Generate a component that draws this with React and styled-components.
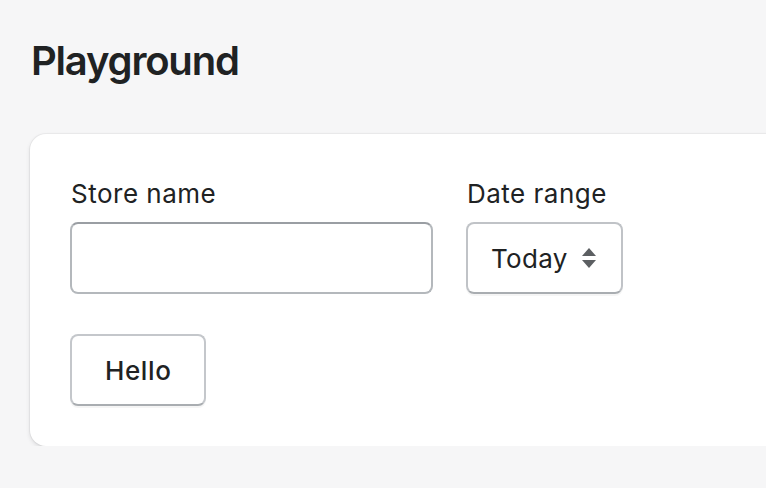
import React, { useState } from 'react';
import styled, { createGlobalStyle } from 'styled-components';

const GlobalStyle = createGlobalStyle`
  html, body {
    margin: 0;
    padding: 0;
    overflow: hidden;
    background: #f6f6f7;
  }
  body {
    font-family: Inter, 'Noto Sans', sans-serif;
    color: #202223;
  }
`;

const Page = styled.div`
  padding: 33px 0 0 30px;
`;

const Title = styled.h1`
  margin: 0 0 46px 1px;
  font-size: 40px;
  line-height: 55px;
  font-weight: 600;
  letter-spacing: -1.2px;
`;

const Card = styled.div`
  width: 1000px;
  background: #fff;
  border-radius: 16px;
  box-shadow: 0 0 0 1px rgba(63, 63, 68, 0.05), 0 2px 4px rgba(63, 63, 68, 0.15);
  padding: 40px;
  box-sizing: border-box;
`;

const Row = styled.div`
  display: flex;
  gap: 33px;
  align-items: flex-end;
`;

const Field = styled.div`
  display: flex;
  flex-direction: column;
`;

const Label = styled.label`
  font-size: 26px;
  line-height: 40px;
  letter-spacing: 0.5px;
  margin-bottom: 8px;
  margin-left: 1px;
`;

const TextInput = styled.input`
  width: 363px;
  height: 72px;
  box-sizing: border-box;
  border: 2px solid #b4b8bc;
  border-top-color: #9a9ea3;
  border-radius: 8px;
  font: inherit;
  font-size: 26px;
  padding: 0 22px;
  outline: none;
  background: #fff;
`;

const SelectBox = styled.div`
  height: 72px;
  box-sizing: border-box;
  display: flex;
  align-items: center;
  gap: 13px;
  padding: 0 24px 0 23px;
  border: 2px solid #c0c3c7;
  border-bottom-color: #a9adb1;
  border-radius: 8px;
  font-size: 26px;
  letter-spacing: 0.3px;
  box-shadow: 0 2px 0 rgba(0, 0, 0, 0.04);
`;

const ButtonRow = styled.div`
  display: flex;
  margin-top: 40px;
`;

const Button = styled.button`
  height: 72px;
  padding: 0 33px;
  box-sizing: border-box;
  background: #fff;
  border: 2px solid #c4c7cb;
  border-bottom-color: #a9adb1;
  border-radius: 8px;
  font: inherit;
  font-size: 26px;
  font-weight: 500;
  letter-spacing: 0.6px;
  color: #202223;
  box-shadow: 0 2px 0 rgba(0, 0, 0, 0.04);
  cursor: pointer;
`;

function Arrows() {
  return (
    <svg width="16" height="22" viewBox="0 0 16 22">
      <path d="M8 1 L15 9 H1 Z" fill="#5c5f62" />
      <path d="M8 21 L15 13 H1 Z" fill="#5c5f62" />
    </svg>
  );
}

export default function App() {
  const [storeName, setStoreName] = useState('');

  return (
    <Page>
      <GlobalStyle />
      <Title>Playground</Title>
      <Card>
        <Row>
          <Field>
            <Label>Store name</Label>
            <TextInput value={storeName} onChange={(e) => setStoreName(e.target.value)} />
          </Field>
          <Field>
            <Label>Date range</Label>
            <SelectBox>
              Today
              <Arrows />
            </SelectBox>
          </Field>
        </Row>
        <ButtonRow>
          <Button>Hello</Button>
        </ButtonRow>
      </Card>
    </Page>
  );
}
